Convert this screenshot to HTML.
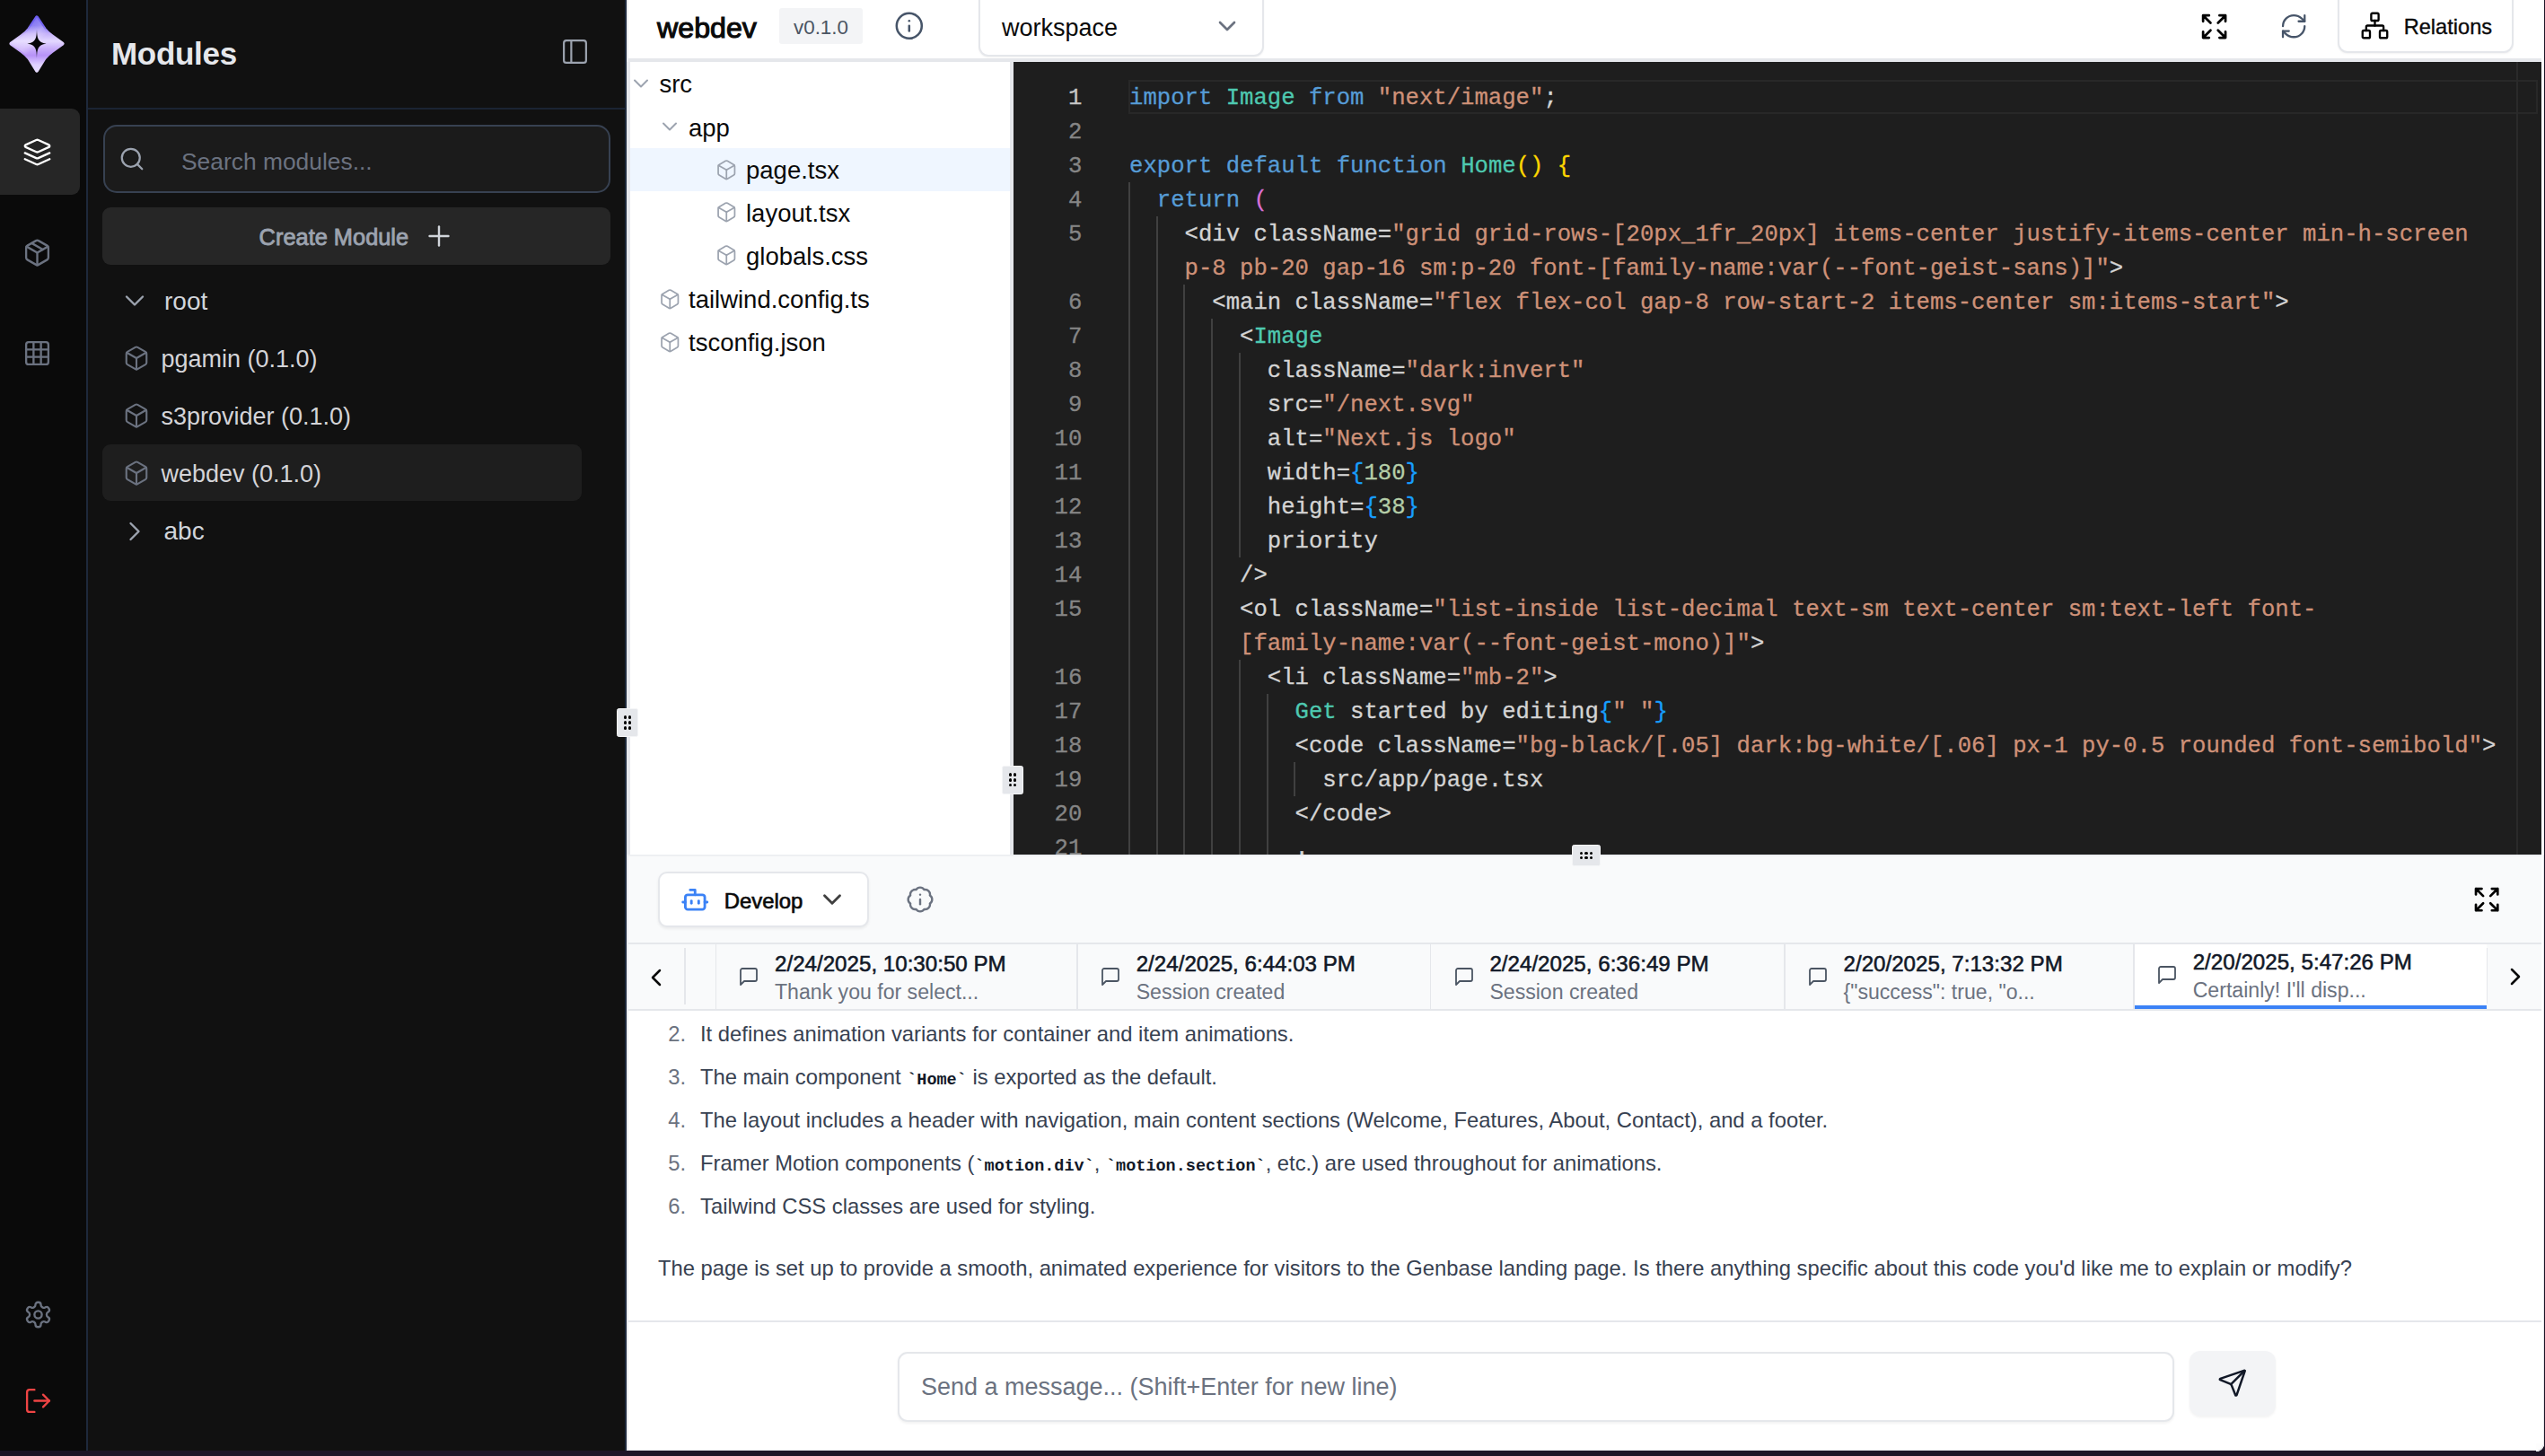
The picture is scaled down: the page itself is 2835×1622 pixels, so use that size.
<!DOCTYPE html>
<html><head><meta charset="utf-8">
<style>
*{box-sizing:border-box;margin:0;padding:0}
html,body{width:2835px;height:1622px;overflow:hidden;background:#1c1426;font-family:"Liberation Sans",sans-serif}
.a{position:absolute}
.t{position:absolute;white-space:pre;line-height:1}
svg{position:absolute;overflow:visible}
.ic{fill:none;stroke-linecap:round;stroke-linejoin:round}
#rail{left:0;top:0;width:96px;height:1616px;background:#0a0a0a}
#railb{left:96px;top:0;width:2px;height:1616px;background:#1e293b}
#mods{left:98px;top:0;width:598px;height:1616px;background:#111111}
#modsb{left:696px;top:0;width:2px;height:1616px;background:#1e293b}
#main{left:698px;top:0;width:2135px;height:1616px;background:#fdfdfd;border-bottom-right-radius:7px;overflow:hidden}
/* code */
.code{font-family:"Liberation Mono",monospace;font-size:25.67px;letter-spacing:0px;color:#d4d4d4;-webkit-text-stroke:0.3px currentColor}
.ic2{font-family:"Liberation Mono",monospace;font-size:18.5px;font-weight:700;color:#111827}
.kw{color:#569cd6}.ty{color:#4ec9b0}.st{color:#ce9178}.nu{color:#b5cea8}.by{color:#ffd700}.bp{color:#da70d6}.bb{color:#179fff}
</style></head><body>
<!-- ICON RAIL -->
<div id="rail" class="a"></div>
<div id="railb" class="a"></div>
<svg style="left:0;top:0" width="96" height="100" viewBox="0 0 96 100">
<defs><linearGradient id="lg" x1="0" y1="17" x2="0" y2="81" gradientUnits="userSpaceOnUse">
<stop offset="0" stop-color="#6a5cf0"/><stop offset="0.18" stop-color="#7566f2"/><stop offset="0.32" stop-color="#c4b0fa"/><stop offset="0.45" stop-color="#e3d8ff"/><stop offset="0.58" stop-color="#c9aefa"/><stop offset="0.7" stop-color="#b792f7"/><stop offset="0.86" stop-color="#dfd0ff"/><stop offset="1" stop-color="#e8deff"/></linearGradient>
<linearGradient id="rg2" x1="20" y1="30" x2="62" y2="70" gradientUnits="userSpaceOnUse"><stop offset="0" stop-color="#ffffff" stop-opacity="0"/><stop offset="0.35" stop-color="#f0e8ff" stop-opacity="0.35"/><stop offset="0.5" stop-color="#ffffff" stop-opacity="0"/><stop offset="1" stop-color="#ffffff" stop-opacity="0"/></linearGradient></defs>
<path id="star" d="M 41.00 19.30 L 49.60 32.40 Q 53.20 37.00 57.80 40.20 L 69.60 48.60 L 57.80 57.00 Q 53.20 60.20 49.60 64.80 L 41.00 78.70 L 32.40 64.80 Q 28.80 60.20 24.20 57.00 L 12.40 48.60 L 24.20 40.20 Q 28.80 37.00 32.40 32.40 Z" fill="url(#lg)" stroke="url(#lg)" stroke-width="4" stroke-linejoin="round"/>
<path d="M 41.00 19.30 L 49.60 32.40 Q 53.20 37.00 57.80 40.20 L 69.60 48.60 L 57.80 57.00 Q 53.20 60.20 49.60 64.80 L 41.00 78.70 L 32.40 64.80 Q 28.80 60.20 24.20 57.00 L 12.40 48.60 L 24.20 40.20 Q 28.80 37.00 32.40 32.40 Z" fill="url(#rg2)"/>
<path d="M41 33 C41.3 42 41.9 47.6 51.6 48.7 C41.9 49.8 41.3 55 41 64.7 C40.7 55 40.1 49.8 30.4 48.7 C40.1 47.6 40.7 42 41 33Z" fill="#050507"/>
</svg>
<div class="a" style="left:0;top:121px;width:89px;height:96px;background:#262626;border-radius:0 9px 9px 0"></div>
<svg class="ic" style="left:24.5px;top:152.5px" width="33" height="33" viewBox="0 0 24 24" stroke="#ffffff" stroke-width="1.7"><path d="m12.83 2.18a2 2 0 0 0-1.66 0L2.6 6.08a1 1 0 0 0 0 1.83l8.58 3.91a2 2 0 0 0 1.66 0l8.58-3.9a1 1 0 0 0 0-1.83Z"/><path d="m22 17.65-9.17 4.16a2 2 0 0 1-1.66 0L2 17.65"/><path d="m22 12.65-9.17 4.16a2 2 0 0 1-1.66 0L2 12.65"/></svg>
<svg class="ic" style="left:24.5px;top:264.5px" width="33" height="33" viewBox="0 0 24 24" stroke="#6b7280" stroke-width="1.7"><path d="m7.5 4.27 9 5.15"/><path d="M21 8a2 2 0 0 0-1-1.73l-7-4a2 2 0 0 0-2 0l-7 4A2 2 0 0 0 3 8v8a2 2 0 0 0 1 1.73l7 4a2 2 0 0 0 2 0l7-4A2 2 0 0 0 21 16Z"/><path d="m3.3 7 8.7 5 8.7-5"/><path d="M12 22V12"/></svg>
<svg class="ic" style="left:24.5px;top:376.5px" width="33" height="33" viewBox="0 0 24 24" stroke="#6b7280" stroke-width="1.7"><rect width="18" height="18" x="3" y="3" rx="2"/><path d="M3 9h18"/><path d="M3 15h18"/><path d="M9 3v18"/><path d="M15 3v18"/></svg>
<svg class="ic" style="left:25.5px;top:1447.7px" width="33" height="33" viewBox="0 0 24 24" stroke="#6b7280" stroke-width="1.7"><path d="M12.22 2h-.44a2 2 0 0 0-2 2v.18a2 2 0 0 1-1 1.73l-.43.25a2 2 0 0 1-2 0l-.15-.08a2 2 0 0 0-2.73.73l-.22.38a2 2 0 0 0 .73 2.73l.15.1a2 2 0 0 1 1 1.72v.51a2 2 0 0 1-1 1.74l-.15.09a2 2 0 0 0-.73 2.730l.22.38a2 2 0 0 0 2.73.73l.15-.08a2 2 0 0 1 2 0l.43.25a2 2 0 0 1 1 1.73V20a2 2 0 0 0 2 2h.44a2 2 0 0 0 2-2v-.18a2 2 0 0 1 1-1.73l.43-.25a2 2 0 0 1 2 0l.15.08a2 2 0 0 0 2.73-.73l.22-.39a2 2 0 0 0-.73-2.73l-.15-.08a2 2 0 0 1-1-1.74v-.5a2 2 0 0 1 1-1.74l.15-.09a2 2 0 0 0 .73-2.73l-.22-.38a2 2 0 0 0-2.73-.73l-.15.08a2 2 0 0 1-2 0l-.43-.25a2 2 0 0 1-1-1.73V4a2 2 0 0 0-2-2z"/><circle cx="12" cy="12" r="3"/></svg>
<svg class="ic" style="left:25.5px;top:1543.8px" width="33" height="33" viewBox="0 0 24 24" stroke="#ef4444" stroke-width="1.7"><path d="M9 21H5a2 2 0 0 1-2-2V5a2 2 0 0 1 2-2h4"/><polyline points="16 17 21 12 16 7"/><line x1="21" x2="9" y1="12" y2="12"/></svg>
<!-- MODULES PANEL -->
<div id="mods" class="a"></div>
<div id="modsb" class="a"></div>
<div class="a" style="left:98px;top:120px;width:598px;height:2px;background:#1b2433"></div>
<div class="t" style="left:124px;top:42.4px;font-size:35px;font-weight:700;letter-spacing:-0.3px;color:#e5e7eb">Modules</div>
<svg class="ic" style="left:623.5px;top:40.5px" width="33" height="33" viewBox="0 0 24 24" stroke="#9ca3af" stroke-width="1.6"><rect width="18" height="18" x="3" y="3" rx="2"/><path d="M9 3v18"/></svg>
<div class="a" style="left:114.5px;top:139px;width:565px;height:75.5px;background:#1b1b1b;border:2px solid #374151;border-radius:15px"></div>
<svg class="ic" style="left:131.5px;top:162px" width="30" height="30" viewBox="0 0 24 24" stroke="#9ca3af" stroke-width="1.8"><circle cx="11" cy="11" r="8"/><path d="m21 21-4.3-4.3"/></svg>
<div class="t" style="left:202px;top:167.1px;font-size:26.4px;color:#6b7280">Search modules...</div>
<div class="a" style="left:114px;top:231px;width:566px;height:63.5px;background:#262626;border-radius:9px"></div>
<div class="t" style="left:288.6px;top:251.67px;font-size:25.4px;color:#9ca3af;-webkit-text-stroke:0.85px #9ca3af">Create Module</div>
<svg class="ic" style="left:471px;top:245px" width="36" height="36" viewBox="0 0 24 24" stroke="#d1d5db" stroke-width="1.6"><path d="M5 12h14"/><path d="M12 5v14"/></svg>
<svg class="ic" style="left:132px;top:317px" width="36" height="36" viewBox="0 0 24 24" stroke="#9ca3af" stroke-width="1.6"><path d="m6 9 6 6 6-6"/></svg>
<div class="t" style="left:183px;top:322.3px;font-size:28px;color:#d1d5db">root</div>
<div class="a" style="left:114px;top:495px;width:534px;height:63px;background:#1e1e1e;border-radius:9px"></div>
<svg class="ic" style="left:137px;top:383.8px" width="30" height="30" viewBox="0 0 24 24" stroke="#6b7280" stroke-width="1.7"><path d="M21 8a2 2 0 0 0-1-1.73l-7-4a2 2 0 0 0-2 0l-7 4A2 2 0 0 0 3 8v8a2 2 0 0 0 1 1.73l7 4a2 2 0 0 0 2 0l7-4A2 2 0 0 0 21 16Z"/><path d="m3.3 7 8.7 5 8.7-5"/><path d="M12 22V12"/></svg>
<div class="t" style="left:179.5px;top:387.1px;font-size:27px;color:#d4d4d8">pgamin (0.1.0)</div>
<svg class="ic" style="left:137px;top:447.8px" width="30" height="30" viewBox="0 0 24 24" stroke="#6b7280" stroke-width="1.7"><path d="M21 8a2 2 0 0 0-1-1.73l-7-4a2 2 0 0 0-2 0l-7 4A2 2 0 0 0 3 8v8a2 2 0 0 0 1 1.73l7 4a2 2 0 0 0 2 0l7-4A2 2 0 0 0 21 16Z"/><path d="m3.3 7 8.7 5 8.7-5"/><path d="M12 22V12"/></svg>
<div class="t" style="left:179.5px;top:451.1px;font-size:27px;color:#d4d4d8">s3provider (0.1.0)</div>
<svg class="ic" style="left:137px;top:511.8px" width="30" height="30" viewBox="0 0 24 24" stroke="#6b7280" stroke-width="1.7"><path d="M21 8a2 2 0 0 0-1-1.73l-7-4a2 2 0 0 0-2 0l-7 4A2 2 0 0 0 3 8v8a2 2 0 0 0 1 1.73l7 4a2 2 0 0 0 2 0l7-4A2 2 0 0 0 21 16Z"/><path d="m3.3 7 8.7 5 8.7-5"/><path d="M12 22V12"/></svg>
<div class="t" style="left:179.5px;top:515.1px;font-size:27px;color:#d4d4d8">webdev (0.1.0)</div>
<svg class="ic" style="left:131.5px;top:574px" width="36" height="36" viewBox="0 0 24 24" stroke="#9ca3af" stroke-width="1.6"><path d="m9 18 6-6-6-6"/></svg>
<div class="t" style="left:182.5px;top:577.8px;font-size:28px;color:#d1d5db">abc</div>
<!-- MAIN -->
<div id="main" class="a"></div>
<!-- MAIN1 -->
<div class="a" style="left:698px;top:0;width:2135px;height:65px;background:#ffffff"></div>
<div class="a" style="left:698px;top:65px;width:2135px;height:4px;background:#e5e7eb"></div>
<div class="a" style="left:698px;top:0;width:2px;height:1616px;background:#eceef1"></div>
<div class="t" style="left:732px;top:14.98px;font-size:32.2px;color:#0a0a0a;-webkit-text-stroke:1.1px #0a0a0a">webdev</div>
<div class="a" style="left:868px;top:8.7px;width:93px;height:40px;background:#f3f4f6;border-radius:3px"></div>
<div class="t" style="left:884px;top:20.3px;font-size:22.4px;color:#4b5563">v0.1.0</div>
<svg class="ic" style="left:996.2px;top:12.2px" width="33.6" height="33.6" viewBox="0 0 24 24" stroke="#475569" stroke-width="1.8"><circle cx="12" cy="12" r="10"/><path d="M12 16v-4"/><path d="M12 8h.01"/></svg>
<div class="a" style="left:1090px;top:-10px;width:318px;height:72.5px;background:#fff;border:2px solid #e5e7eb;border-radius:11px;box-shadow:0 1px 2px rgba(0,0,0,0.05)"></div>
<div class="t" style="left:1116px;top:17.85px;font-size:27px;color:#0a0a0a">workspace</div>
<svg class="ic" style="left:1350.6px;top:13px" width="32" height="32" viewBox="0 0 24 24" stroke="#6b7280" stroke-width="2"><path d="m6 9 6 6 6-6"/></svg>
<svg class="ic" style="left:2450.4px;top:12.5px" width="33.2" height="33.2" viewBox="0 0 24 24" stroke="#000" stroke-width="2"><path d="m21 21-6-6m6 6v-4.8m0 4.8h-4.8"/><path d="M3 16.2V21m0 0h4.8M3 21l6-6"/><path d="M21 7.8V3m0 0h-4.8M21 3l-6 6"/><path d="M3 7.8V3m0 0h4.8M3 3l6 6"/></svg>
<svg class="ic" style="left:2539.15px;top:12.75px" width="32.3" height="32.3" viewBox="0 0 24 24" stroke="#475569" stroke-width="1.7"><path d="M3 12a9 9 0 0 1 9-9 9.75 9.75 0 0 1 6.74 2.74L21 8"/><path d="M21 3v5h-5"/><path d="M21 12a9 9 0 0 1-9 9 9.75 9.75 0 0 1-6.74-2.74L3 16"/><path d="M8 16H3v5"/></svg>
<div class="a" style="left:2604.4px;top:-10px;width:195.6px;height:69.4px;background:#fff;border:2px solid #e5e7eb;border-radius:11px;box-shadow:0 1px 2px rgba(0,0,0,0.05)"></div>
<svg class="ic" style="left:2628.5px;top:12.3px" width="33" height="33" viewBox="0 0 24 24" stroke="#000" stroke-width="1.7"><rect x="16" y="16" width="6" height="6" rx="1"/><rect x="2" y="16" width="6" height="6" rx="1"/><rect x="9" y="2" width="6" height="6" rx="1"/><path d="M5 16v-3a1 1 0 0 1 1-1h12a1 1 0 0 1 1 1v3"/><path d="M12 12V8"/></svg>
<div class="t" style="left:2677.7px;top:19.4px;font-size:23.6px;color:#0a0a0a;-webkit-text-stroke:0.35px #0a0a0a">Relations</div>
<div class="a" style="left:698px;top:69px;width:4px;height:883px;background:#e5e7eb"></div>
<div class="a" style="left:702px;top:69px;width:423px;height:883px;background:#ffffff"></div>
<div class="a" style="left:1125px;top:69px;width:4px;height:883px;background:#e5e7eb"></div>
<div class="a" style="left:702px;top:165px;width:423px;height:48px;background:#eff6ff"></div>
<svg class="ic" style="left:700px;top:78.9px" width="28" height="28" viewBox="0 0 24 24" stroke="#9ca3af" stroke-width="1.7"><path d="m6 9 6 6 6-6"/></svg>
<div class="t" style="left:734.4px;top:79.92px;font-size:27.5px;color:#0a0a0a">src</div>
<svg class="ic" style="left:732px;top:127px" width="28" height="28" viewBox="0 0 24 24" stroke="#9ca3af" stroke-width="1.7"><path d="m6 9 6 6 6-6"/></svg>
<div class="t" style="left:767px;top:128.52px;font-size:27.5px;color:#0a0a0a">app</div>
<svg class="ic" style="left:797.45px;top:176.65px" width="24.5" height="24.5" viewBox="0 0 24 24" stroke="#9ca3af" stroke-width="1.7"><path d="M21 8a2 2 0 0 0-1-1.73l-7-4a2 2 0 0 0-2 0l-7 4A2 2 0 0 0 3 8v8a2 2 0 0 0 1 1.73l7 4a2 2 0 0 0 2 0l7-4A2 2 0 0 0 21 16Z"/><path d="m3.3 7 8.7 5 8.7-5"/><path d="M12 22V12"/></svg>
<div class="t" style="left:831px;top:176.42px;font-size:27.5px;color:#0a0a0a">page.tsx</div>
<svg class="ic" style="left:797.45px;top:224.45px" width="24.5" height="24.5" viewBox="0 0 24 24" stroke="#9ca3af" stroke-width="1.7"><path d="M21 8a2 2 0 0 0-1-1.73l-7-4a2 2 0 0 0-2 0l-7 4A2 2 0 0 0 3 8v8a2 2 0 0 0 1 1.73l7 4a2 2 0 0 0 2 0l7-4A2 2 0 0 0 21 16Z"/><path d="m3.3 7 8.7 5 8.7-5"/><path d="M12 22V12"/></svg>
<div class="t" style="left:831px;top:224.22px;font-size:27.5px;color:#0a0a0a">layout.tsx</div>
<svg class="ic" style="left:797.45px;top:272.25px" width="24.5" height="24.5" viewBox="0 0 24 24" stroke="#9ca3af" stroke-width="1.7"><path d="M21 8a2 2 0 0 0-1-1.73l-7-4a2 2 0 0 0-2 0l-7 4A2 2 0 0 0 3 8v8a2 2 0 0 0 1 1.73l7 4a2 2 0 0 0 2 0l7-4A2 2 0 0 0 21 16Z"/><path d="m3.3 7 8.7 5 8.7-5"/><path d="M12 22V12"/></svg>
<div class="t" style="left:831px;top:272.12px;font-size:27.5px;color:#0a0a0a">globals.css</div>
<svg class="ic" style="left:733.55px;top:320.95px" width="24.5" height="24.5" viewBox="0 0 24 24" stroke="#9ca3af" stroke-width="1.7"><path d="M21 8a2 2 0 0 0-1-1.73l-7-4a2 2 0 0 0-2 0l-7 4A2 2 0 0 0 3 8v8a2 2 0 0 0 1 1.73l7 4a2 2 0 0 0 2 0l7-4A2 2 0 0 0 21 16Z"/><path d="m3.3 7 8.7 5 8.7-5"/><path d="M12 22V12"/></svg>
<div class="t" style="left:767px;top:320.42px;font-size:27.5px;color:#0a0a0a">tailwind.config.ts</div>
<svg class="ic" style="left:733.55px;top:368.75px" width="24.5" height="24.5" viewBox="0 0 24 24" stroke="#9ca3af" stroke-width="1.7"><path d="M21 8a2 2 0 0 0-1-1.73l-7-4a2 2 0 0 0-2 0l-7 4A2 2 0 0 0 3 8v8a2 2 0 0 0 1 1.73l7 4a2 2 0 0 0 2 0l7-4A2 2 0 0 0 21 16Z"/><path d="m3.3 7 8.7 5 8.7-5"/><path d="M12 22V12"/></svg>
<div class="t" style="left:767px;top:368.32px;font-size:27.5px;color:#0a0a0a">tsconfig.json</div>
<!-- EDITOR -->
<div class="a" style="left:1129px;top:69px;width:1702px;height:883px;background:#1e1e1e;overflow:hidden">
<div class="a" style="left:128px;top:20.400000000000006px;width:1570px;height:37.6px;border:2px solid #282828"></div>
<div class="a" style="left:1674px;top:0;width:1.5px;height:883px;background:#2a2a2a"></div>
<div class="a" style="left:127.8px;top:133.83px;width:2px;height:760.2px;background:#404040"></div>
<div class="a" style="left:158.57px;top:171.84px;width:2px;height:722.19px;background:#404040"></div>
<div class="a" style="left:189.34px;top:247.86px;width:2px;height:646.17px;background:#404040"></div>
<div class="a" style="left:220.11px;top:285.87px;width:2px;height:608.16px;background:#404040"></div>
<div class="a" style="left:250.88px;top:323.88px;width:2px;height:228.06px;background:#404040"></div>
<div class="a" style="left:250.88px;top:665.97px;width:2px;height:228.06px;background:#404040"></div>
<div class="a" style="left:281.65px;top:703.98px;width:2px;height:190.05px;background:#404040"></div>
<div class="a" style="left:312.42px;top:780.0px;width:2px;height:38.01px;background:#404040"></div>
<div class="a code" style="font-size:25.638px;left:129px;top:21.77px;line-height:38.01px;white-space:pre"><div style="height:38.01px"><span class="kw">import</span> <span class="ty">Image</span> <span class="kw">from</span> <span class="st">"next/image"</span>;</div><div style="height:38.01px"></div><div style="height:38.01px"><span class="kw">export</span> <span class="kw">default</span> <span class="kw">function</span> <span class="ty">Home</span><span class="by">()</span> <span class="by">{</span></div><div style="height:38.01px">  <span class="kw">return</span> <span class="bp">(</span></div><div style="height:38.01px">    &lt;div className=<span class="st">"grid grid-rows-[20px_1fr_20px] items-center justify-items-center min-h-screen</span></div><div style="height:38.01px">    <span class="st">p-8 pb-20 gap-16 sm:p-20 font-[family-name:var(--font-geist-sans)]"</span>&gt;</div><div style="height:38.01px">      &lt;main className=<span class="st">"flex flex-col gap-8 row-start-2 items-center sm:items-start"</span>&gt;</div><div style="height:38.01px">        &lt;<span class="ty">Image</span></div><div style="height:38.01px">          className=<span class="st">"dark:invert"</span></div><div style="height:38.01px">          src=<span class="st">"/next.svg"</span></div><div style="height:38.01px">          alt=<span class="st">"Next.js logo"</span></div><div style="height:38.01px">          width=<span class="bb">{</span><span class="nu">180</span><span class="bb">}</span></div><div style="height:38.01px">          height=<span class="bb">{</span><span class="nu">38</span><span class="bb">}</span></div><div style="height:38.01px">          priority</div><div style="height:38.01px">        /&gt;</div><div style="height:38.01px">        &lt;ol className=<span class="st">"list-inside list-decimal text-sm text-center sm:text-left font-</span></div><div style="height:38.01px">        <span class="st">[family-name:var(--font-geist-mono)]"</span>&gt;</div><div style="height:38.01px">          &lt;li className=<span class="st">"mb-2"</span>&gt;</div><div style="height:38.01px">            <span class="ty">Get</span> started by editing<span class="bb">{</span><span class="st">" "</span><span class="bb">}</span></div><div style="height:38.01px">            &lt;code className=<span class="st">"bg-black/[.05] dark:bg-white/[.06] px-1 py-0.5 rounded font-semibold"</span>&gt;</div><div style="height:38.01px">              src/app/page.tsx</div><div style="height:38.01px">            &lt;/code&gt;</div><div style="height:38.01px">            .</div></div>
<div class="a code" style="font-size:25.638px;left:0;width:76.29999999999995px;top:21.77px;line-height:38.01px;text-align:right;color:#858585"><div style="height:38.01px;color:#c6c6c6">1</div><div style="height:38.01px">2</div><div style="height:38.01px">3</div><div style="height:38.01px">4</div><div style="height:38.01px">5</div><div style="height:38.01px"></div><div style="height:38.01px">6</div><div style="height:38.01px">7</div><div style="height:38.01px">8</div><div style="height:38.01px">9</div><div style="height:38.01px">10</div><div style="height:38.01px">11</div><div style="height:38.01px">12</div><div style="height:38.01px">13</div><div style="height:38.01px">14</div><div style="height:38.01px">15</div><div style="height:38.01px"></div><div style="height:38.01px">16</div><div style="height:38.01px">17</div><div style="height:38.01px">18</div><div style="height:38.01px">19</div><div style="height:38.01px">20</div><div style="height:38.01px">21</div></div>
</div>
<!-- /EDITOR -->
<!-- CHAT -->
<div class="a" style="left:700px;top:952px;width:2133px;height:2px;background:#eef0f2"></div>
<div class="a" style="left:700px;top:954px;width:2133px;height:96px;background:#f9fafb"></div>
<div class="a" style="left:700px;top:1050px;width:2133px;height:2px;background:#e5e7eb"></div>
<div class="a" style="left:700px;top:1052px;width:2133px;height:72px;background:#f9fafb"></div>
<div class="a" style="left:700px;top:1124px;width:2133px;height:2px;background:#e5e7eb"></div>
<div class="a" style="left:700px;top:1126px;width:2133px;height:345px;background:#ffffff"></div>
<div class="a" style="left:700px;top:1471px;width:2133px;height:2px;background:#e5e7eb"></div>
<div class="a" style="left:700px;top:1473px;width:2133px;height:143px;background:#ffffff"></div>
<div class="a" style="left:733.4px;top:971.3px;width:234.2px;height:61.3px;background:#fff;border:2px solid #e5e7eb;border-radius:10px;box-shadow:0 1.5px 3px rgba(0,0,0,0.06)"></div>
<svg class="ic" style="left:757.75px;top:985.65px" width="32.5" height="32.5" viewBox="0 0 24 24" stroke="#3b82f6" stroke-width="2.1"><path d="M12 8V4H8"/><rect width="16" height="12" x="4" y="8" rx="2"/><path d="M2 14h2"/><path d="M20 14h2"/><path d="M15 13v2"/><path d="M9 13v2"/></svg>
<div class="t" style="left:806.7px;top:992.27px;font-size:23.9px;color:#0a0a0a;-webkit-text-stroke:0.65px #0a0a0a">Develop</div>
<svg class="ic" style="left:910px;top:985.4px" width="34" height="34" viewBox="0 0 24 24" stroke="#404040" stroke-width="2"><path d="m6 9 6 6 6-6"/></svg>
<svg class="ic" style="left:1009px;top:986.2px" width="32" height="32" viewBox="0 0 24 24" stroke="#6b7280" stroke-width="1.8"><path d="M3.85 8.62a4 4 0 0 1 4.78-4.77 4 4 0 0 1 6.74 0 4 4 0 0 1 4.78 4.78 4 4 0 0 1 0 6.74 4 4 0 0 1-4.77 4.78 4 4 0 0 1-6.75 0 4 4 0 0 1-4.78-4.77 4 4 0 0 1 0-6.76Z"/><line x1="12" x2="12" y1="16" y2="12"/><line x1="12" x2="12.01" y1="8" y2="8"/></svg>
<svg class="ic" style="left:2753.85px;top:985.75px" width="32.3" height="32.3" viewBox="0 0 24 24" stroke="#000" stroke-width="2"><path d="m21 21-6-6m6 6v-4.8m0 4.8h-4.8"/><path d="M3 16.2V21m0 0h4.8M3 21l6-6"/><path d="M21 7.8V3m0 0h-4.8M21 3l-6 6"/><path d="M3 7.8V3m0 0h4.8M3 3l6 6"/></svg>
<svg class="ic" style="left:715.2px;top:1072.5px" width="32" height="32" viewBox="0 0 24 24" stroke="#0a0a0a" stroke-width="1.9"><path d="m15 18-6-6 6-6"/></svg>
<div class="a" style="left:762.3px;top:1056px;width:1.6px;height:63px;background:#e5e7eb"></div>
<div class="a" style="left:796.5px;top:1052px;width:1.6px;height:72px;background:#e5e7eb"></div>
<svg class="ic" style="left:822.31px;top:1076.20px" width="24" height="24" viewBox="0 0 24 24" stroke="#4b5563" stroke-width="1.8"><path d="M21 15a2 2 0 0 1-2 2H7l-4 4V5a2 2 0 0 1 2-2h14a2 2 0 0 1 2 2z"/></svg>
<div class="t" style="left:863.0px;top:1061.73px;font-size:24.15px;font-weight:400;-webkit-text-stroke:0.55px #111827;color:#111827">2/24/2025, 10:30:50 PM</div>
<div class="t" style="left:863.0px;top:1094.35px;font-size:23.1px;color:#6b7280">Thank you for select...</div>
<div class="a" style="left:1199.2px;top:1052px;width:1.6px;height:72px;background:#e5e7eb"></div>
<svg class="ic" style="left:1225.01px;top:1076.20px" width="24" height="24" viewBox="0 0 24 24" stroke="#4b5563" stroke-width="1.8"><path d="M21 15a2 2 0 0 1-2 2H7l-4 4V5a2 2 0 0 1 2-2h14a2 2 0 0 1 2 2z"/></svg>
<div class="t" style="left:1265.7px;top:1061.73px;font-size:24.15px;font-weight:400;-webkit-text-stroke:0.55px #111827;color:#111827">2/24/2025, 6:44:03 PM</div>
<div class="t" style="left:1265.7px;top:1094.35px;font-size:23.1px;color:#6b7280">Session created</div>
<div class="a" style="left:1592.9px;top:1052px;width:1.6px;height:72px;background:#e5e7eb"></div>
<svg class="ic" style="left:1618.71px;top:1076.20px" width="24" height="24" viewBox="0 0 24 24" stroke="#4b5563" stroke-width="1.8"><path d="M21 15a2 2 0 0 1-2 2H7l-4 4V5a2 2 0 0 1 2-2h14a2 2 0 0 1 2 2z"/></svg>
<div class="t" style="left:1659.4px;top:1061.73px;font-size:24.15px;font-weight:400;-webkit-text-stroke:0.55px #111827;color:#111827">2/24/2025, 6:36:49 PM</div>
<div class="t" style="left:1659.4px;top:1094.35px;font-size:23.1px;color:#6b7280">Session created</div>
<div class="a" style="left:1987.0px;top:1052px;width:1.6px;height:72px;background:#e5e7eb"></div>
<svg class="ic" style="left:2012.81px;top:1076.20px" width="24" height="24" viewBox="0 0 24 24" stroke="#4b5563" stroke-width="1.8"><path d="M21 15a2 2 0 0 1-2 2H7l-4 4V5a2 2 0 0 1 2-2h14a2 2 0 0 1 2 2z"/></svg>
<div class="t" style="left:2053.5px;top:1061.73px;font-size:24.15px;font-weight:400;-webkit-text-stroke:0.55px #111827;color:#111827">2/20/2025, 7:13:32 PM</div>
<div class="t" style="left:2053.5px;top:1094.35px;font-size:23.1px;color:#6b7280">{&quot;success&quot;: true, &quot;o...</div>
<div class="a" style="left:2377px;top:1052px;width:392.5px;height:72px;background:#ffffff"></div>
<div class="a" style="left:2377px;top:1119.6px;width:392.5px;height:4.4px;background:#3b82f6"></div>
<div class="a" style="left:2769.5px;top:1055.7px;width:1.8px;height:62.3px;background:#e5e7eb"></div>
<div class="a" style="left:2376.2px;top:1052px;width:1.6px;height:72px;background:#e5e7eb"></div>
<svg class="ic" style="left:2402.01px;top:1074.20px" width="24" height="24" viewBox="0 0 24 24" stroke="#4b5563" stroke-width="1.8"><path d="M21 15a2 2 0 0 1-2 2H7l-4 4V5a2 2 0 0 1 2-2h14a2 2 0 0 1 2 2z"/></svg>
<div class="t" style="left:2442.7px;top:1059.73px;font-size:24.15px;font-weight:400;-webkit-text-stroke:0.55px #111827;color:#111827">2/20/2025, 5:47:26 PM</div>
<div class="t" style="left:2442.7px;top:1092.35px;font-size:23.1px;color:#6b7280">Certainly! I'll disp...</div>
<svg class="ic" style="left:2786.2px;top:1071.6px" width="32" height="32" viewBox="0 0 24 24" stroke="#0a0a0a" stroke-width="1.9"><path d="m9 18 6-6-6-6"/></svg>
<div class="t" style="left:744.3px;top:1140.05px;font-size:23.8px;color:#6b7280">2.</div>
<div class="t" style="left:780px;top:1140.05px;font-size:23.8px;color:#374151">It defines animation variants for container and item animations.</div>
<div class="t" style="left:744.3px;top:1187.85px;font-size:23.8px;color:#6b7280">3.</div>
<div class="t" style="left:780px;top:1187.85px;font-size:23.8px;color:#374151">The main component <b class="ic2">`Home`</b> is exported as the default.</div>
<div class="t" style="left:744.3px;top:1235.65px;font-size:23.8px;color:#6b7280">4.</div>
<div class="t" style="left:780px;top:1235.65px;font-size:23.8px;color:#374151">The layout includes a header with navigation, main content sections (Welcome, Features, About, Contact), and a footer.</div>
<div class="t" style="left:744.3px;top:1283.75px;font-size:23.8px;color:#6b7280">5.</div>
<div class="t" style="left:780px;top:1283.75px;font-size:23.8px;color:#374151">Framer Motion components (<b class="ic2">`motion.div`</b>, <b class="ic2">`motion.section`</b>, etc.) are used throughout for animations.</div>
<div class="t" style="left:744.3px;top:1331.85px;font-size:23.8px;color:#6b7280">6.</div>
<div class="t" style="left:780px;top:1331.85px;font-size:23.8px;color:#374151">Tailwind CSS classes are used for styling.</div>
<div class="t" style="left:733px;top:1400.65px;font-size:23.8px;color:#374151">The page is set up to provide a smooth, animated experience for visitors to the Genbase landing page. Is there anything specific about this code you'd like me to explain or modify?</div>
<div class="a" style="left:999.7px;top:1505.9px;width:1422.3px;height:77.9px;background:#fff;border:2px solid #e5e7eb;border-radius:11px;box-shadow:0 1.5px 3px rgba(0,0,0,0.05)"></div>
<div class="t" style="left:1025.9px;top:1531.54px;font-size:27px;color:#6b7280">Send a message... (Shift+Enter for new line)</div>
<div class="a" style="left:2439px;top:1505px;width:95.7px;height:71.8px;background:#f3f4f6;border-radius:12px;box-shadow:0 1.5px 3px rgba(0,0,0,0.05)"></div>
<svg class="ic" style="left:2470.1px;top:1524.3px" width="33.4" height="33.4" viewBox="0 0 24 24" stroke="#111827" stroke-width="1.8"><path d="M14.536 21.686a.5.5 0 0 0 .937-.024l6.5-19a.496.496 0 0 0-.635-.635l-19 6.5a.5.5 0 0 0-.024.937l7.93 3.18a2 2 0 0 1 1.112 1.11z"/><path d="m21.854 2.147-10.94 10.939"/></svg>
<div class="a" style="left:687px;top:789px;width:23.6px;height:31.7px;background:#e5e7eb;border-radius:2.5px;border:0.8px solid #f4f5f7"></div><div class="a" style="left:694.7px;top:797.3px;width:3.4px;height:3.4px;border-radius:50%;background:#000"></div><div class="a" style="left:699.8px;top:797.3px;width:3.4px;height:3.4px;border-radius:50%;background:#000"></div><div class="a" style="left:694.7px;top:803.2px;width:3.4px;height:3.4px;border-radius:50%;background:#000"></div><div class="a" style="left:699.8px;top:803.2px;width:3.4px;height:3.4px;border-radius:50%;background:#000"></div><div class="a" style="left:694.7px;top:809.2px;width:3.4px;height:3.4px;border-radius:50%;background:#000"></div><div class="a" style="left:699.8px;top:809.2px;width:3.4px;height:3.4px;border-radius:50%;background:#000"></div>
<div class="a" style="left:1116.3px;top:853.2px;width:23.5px;height:31.5px;background:#e5e7eb;border-radius:2.5px;border:0.8px solid #f4f5f7"></div><div class="a" style="left:1123.8px;top:861.3px;width:3.4px;height:3.4px;border-radius:50%;background:#000"></div><div class="a" style="left:1128.8px;top:861.3px;width:3.4px;height:3.4px;border-radius:50%;background:#000"></div><div class="a" style="left:1123.8px;top:867.3px;width:3.4px;height:3.4px;border-radius:50%;background:#000"></div><div class="a" style="left:1128.8px;top:867.3px;width:3.4px;height:3.4px;border-radius:50%;background:#000"></div><div class="a" style="left:1123.8px;top:873.1px;width:3.4px;height:3.4px;border-radius:50%;background:#000"></div><div class="a" style="left:1128.8px;top:873.1px;width:3.4px;height:3.4px;border-radius:50%;background:#000"></div>
<div class="a" style="left:1751px;top:941px;width:31.9px;height:23.8px;background:#e5e7eb;border-radius:2.5px;border:0.8px solid #f4f5f7"></div><div class="a" style="left:1759.5px;top:948.8px;width:3.4px;height:3.4px;border-radius:50%;background:#000"></div><div class="a" style="left:1765.3px;top:948.8px;width:3.4px;height:3.4px;border-radius:50%;background:#000"></div><div class="a" style="left:1771.1px;top:948.8px;width:3.4px;height:3.4px;border-radius:50%;background:#000"></div><div class="a" style="left:1759.5px;top:953.8px;width:3.4px;height:3.4px;border-radius:50%;background:#000"></div><div class="a" style="left:1765.3px;top:953.8px;width:3.4px;height:3.4px;border-radius:50%;background:#000"></div><div class="a" style="left:1771.1px;top:953.8px;width:3.4px;height:3.4px;border-radius:50%;background:#000"></div>

<!-- CORNER -->
<div class="a" style="left:2831px;top:0;width:3px;height:1616px;background:#fdfdfd"></div>
<div class="a" style="left:2832.8px;top:952px;width:1.4px;height:664px;background:#e3e5e8"></div>
<div class="a" style="left:698px;top:1615px;width:2136px;height:1.4px;background:#e3e5e8"></div>
<div class="a" style="left:2825px;top:1607.5px;width:9.4px;height:9.4px;background:radial-gradient(circle at 0 0,#fdfdfd 7.6px,#e3e5e8 8px,#e3e5e8 9px,#1c1426 9.5px)"></div>
</body></html>
